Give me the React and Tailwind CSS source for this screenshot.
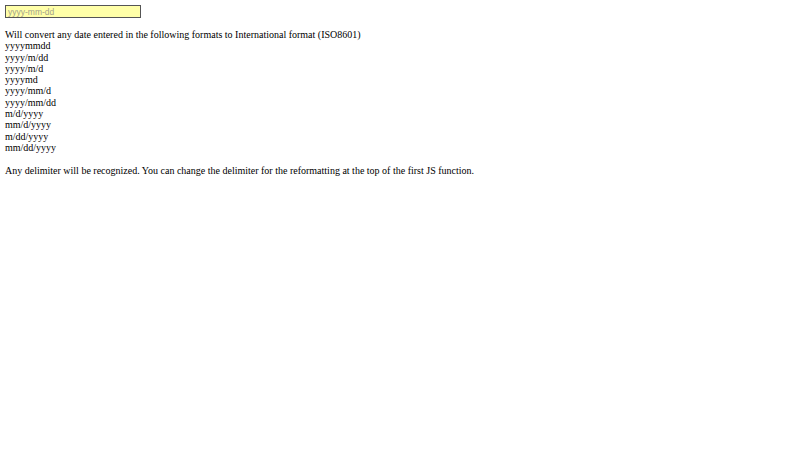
export default function App() {
  const formats = [
    'yyyymmdd',
    'yyyy/m/dd',
    'yyyy/m/d',
    'yyyymd',
    'yyyy/mm/d',
    'yyyy/mm/dd',
    'm/d/yyyy',
    'mm/d/yyyy',
    'm/dd/yyyy',
    'mm/dd/yyyy',
  ];

  return (
    <div className="p-[5px] text-[10px] leading-[11.3px] text-black bg-white min-h-screen" style={{ fontFamily: '"Liberation Serif", "Times New Roman", serif' }}>
      <input
        type="text"
        placeholder="yyyy-mm-dd"
        className="block w-[136px] h-[13px] bg-[#ffffa8] border border-[#555555] px-[2px] text-[8.5px] leading-[11px] outline-none placeholder:text-[#a3a38a]"
        style={{ fontFamily: '"Liberation Sans", Arial, sans-serif' }}
      />
      <div className="mt-[11px]">
        <div>Will convert any date entered in the following formats to International format (ISO8601)</div>
        {formats.map((f) => (
          <div key={f}>{f}</div>
        ))}
        <div className="mt-[11.3px]">
          Any delimiter will be recognized. You can change the delimiter for the reformatting at the top of the first JS function.
        </div>
      </div>
    </div>
  );
}
